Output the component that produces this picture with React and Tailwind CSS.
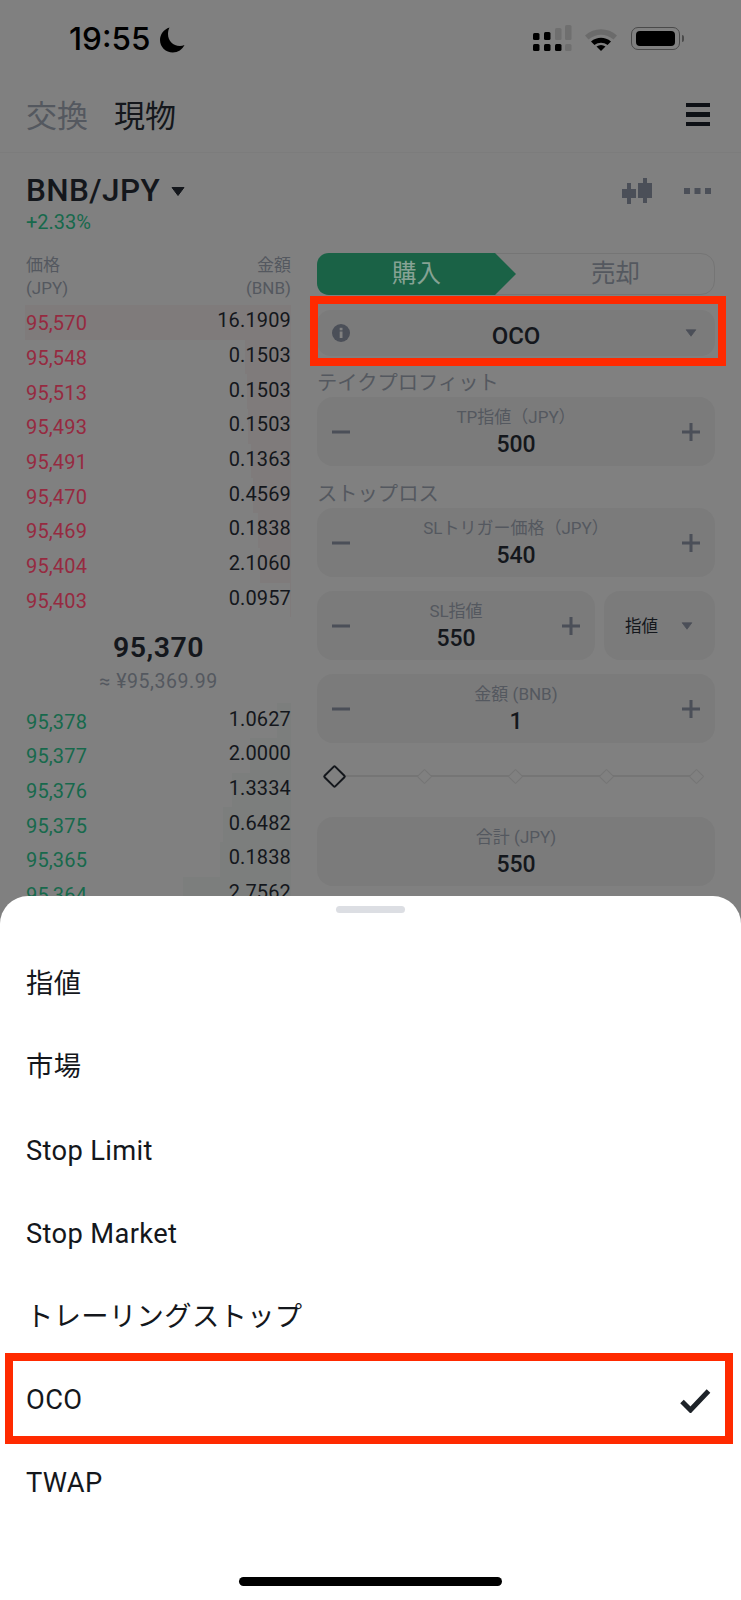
const asks = [
  ['95,570', '16.1909', 266],
  ['95,548', '0.1503', 46],
  ['95,513', '0.1503', 44],
  ['95,493', '0.1503', 43],
  ['95,491', '0.1363', 40],
  ['95,470', '0.4569', 38],
  ['95,469', '0.1838', 33],
  ['95,404', '2.1060', 31],
  ['95,403', '0.0957', 1],
];

const bids = [
  ['95,378', '1.0627', 14],
  ['95,377', '2.0000', 41],
  ['95,376', '1.3334', 59],
  ['95,375', '0.6482', 68],
  ['95,365', '0.1838', 71],
  ['95,364', '2.7562', 108],
];

const sheetItems = ['指値', '市場', 'Stop Limit', 'Stop Market', 'トレーリングストップ', 'OCO', 'TWAP'];

const Caret = ({ className }) => (
  <svg viewBox="0 0 14 10" className={className} fill="currentColor">
    <path d="M1 1h12L7 9z" stroke="currentColor" strokeWidth="1" strokeLinejoin="round" />
  </svg>
);

const Signal = () => (
  <svg width="39" height="27" viewBox="0 0 39 27" className="absolute left-[533px] top-[25px]">
    <rect x="0" y="8" width="6.5" height="7" rx="1.5" fill="#000" />
    <rect x="11" y="7" width="6.5" height="8" rx="1.5" fill="#000" />
    <rect x="22" y="3" width="6.5" height="12" rx="1.5" fill="#6f6f6f" />
    <rect x="32" y="0" width="6.5" height="15" rx="1.5" fill="#6f6f6f" />
    <rect x="0" y="19" width="6.5" height="7" rx="1.5" fill="#000" />
    <rect x="11" y="19" width="6.5" height="7" rx="1.5" fill="#000" />
    <rect x="22" y="19" width="6.5" height="7" rx="1.5" fill="#000" />
    <rect x="32" y="19" width="6.5" height="7" rx="1.5" fill="#6f6f6f" />
  </svg>
);

const Wifi = () => (
  <svg width="34" height="24" viewBox="0 0 34 24" className="absolute left-[584px] top-[27px]">
    <path d="M1 8.5C10 0 24 0 33 8.5L29.5 12.5C22 6 12 6 4.5 12.5z" fill="#6b6b6b" />
    <path d="M7 14.5C13 9.5 21 9.5 27 14.5L23.5 18C19.5 15 14.5 15 10.5 18z" fill="#000" />
    <path d="M12.5 19.5C15.5 17.5 18.5 17.5 21.5 19.5L17 24z" fill="#000" />
  </svg>
);

const Battery = () => (
  <div className="absolute left-[631px] top-[27px] flex items-center">
    <div className="flex h-[23px] w-[49px] items-center justify-center rounded-[7px] border-[1.5px] border-[#4a4a4a]">
      <div className="h-[15px] w-[39px] rounded-[4px] bg-black" />
    </div>
    <div className="ml-[2px] h-[7px] w-[2px] rounded-r-full bg-[#4a4a4a]" />
  </div>
);

const StatusBar = () => (
  <div className="relative h-[76px] shrink-0">
    <span className="absolute left-[69px] top-[20px] font-['Inter',sans-serif] text-[31.5px] leading-[38px] font-medium text-black">19:55</span>
    <svg width="25" height="26" viewBox="0 0 25 26" className="absolute left-[160px] top-[27px]">
      <path d="M9.5 0.5C3.8 2.4 0 7.3 0 13c0 7.1 5.8 12.5 12.8 12.5 5.2 0 9.6-2.9 11.7-7.4-1.4.6-3 .9-4.6.9C13 19 8 13.9 8 7c0-2.4.5-4.6 1.5-6.5z" fill="#000" />
    </svg>
    <Signal />
    <Wifi />
    <Battery />
  </div>
);

const Header = () => (
  <div className="flex h-[77px] shrink-0 items-center justify-between border-b border-[#7c7c7c] pr-[31px] pb-[1px] pl-[26px]">
    <div className="mt-[6px] flex items-center gap-[26px] text-[31px] leading-none">
      <span className="text-[#54585f]">交換</span>
      <span className="text-[#14171c]">現物</span>
    </div>
    <div className="mt-[2px] flex w-[24px] flex-col gap-[5px]">
      <div className="h-[4.5px] bg-[#0e1116]" />
      <div className="h-[4.5px] bg-[#0e1116]" />
      <div className="h-[4.5px] bg-[#0e1116]" />
    </div>
  </div>
);

const PairBar = () => (
  <div className="flex h-[97px] shrink-0 items-start justify-between pt-[20px] pr-[30px] pl-[26px]">
    <div>
      <div className="flex items-center gap-[11px]">
        <span className="text-[31.5px] leading-[36px] font-medium tracking-[0.4px] text-[#14171c]">BNB/JPY</span>
        <Caret className="h-[11px] w-[14px] text-[#14171c]" />
      </div>
      <div className="mt-[1px] text-[20px] leading-[24px] text-[#17694c]">+2.33%</div>
    </div>
    <div className="mt-[5px] flex items-center gap-[32px]">
      <svg width="30" height="26" viewBox="0 0 30 26" fill="#4b4f58">
        <rect x="5" y="5" width="4" height="21" />
        <rect x="0" y="11" width="14" height="9" />
        <rect x="21" y="0" width="4" height="25" />
        <rect x="16" y="5" width="14" height="15" />
      </svg>
      <svg width="27" height="6" viewBox="0 0 27 6" fill="#4b4f58">
        <rect x="0" y="0" width="6" height="6" />
        <rect x="10.5" y="0" width="6" height="6" />
        <rect x="21" y="0" width="6" height="6" />
      </svg>
    </div>
  </div>
);

const BookRow = ({ row, priceClass, barClass }) => (
  <div className="relative flex h-[34.7px] items-center justify-between">
    <div className={`absolute top-0 right-0 bottom-0 ${barClass}`} style={{ width: row[2] }} />
    <span className={`relative mt-[2px] text-[20px] tracking-[0.15px] ${priceClass}`}>{row[0]}</span>
    <span className="relative mt-[-4px] text-[20px] tracking-[0.15px] text-[#14171c]">{row[1]}</span>
  </div>
);

const OrderBook = () => (
  <div className="w-[265px] shrink-0">
    <div className="flex h-[55px] justify-between pt-[4px] text-[17px] leading-[23px] text-[#54585f]">
      <div>価格<br />(JPY)</div>
      <div className="text-right">金額<br />(BNB)</div>
    </div>
    {asks.map((r) => <BookRow key={r[0]} row={r} priceClass="text-[#962a40]" barClass="bg-[#7f7b7b]" />)}
    <div className="flex h-[86px] flex-col items-center pt-[11px]">
      <span className="text-[28.5px] leading-[40px] font-semibold tracking-[0.5px] text-[#14171c]">95,370</span>
      <span className="mt-[1px] text-[19.5px] leading-[26px] tracking-[0.55px] text-[#54585f]">≈ ¥95,369.99</span>
    </div>
    {bids.map((r) => <BookRow key={r[0]} row={r} priceClass="text-[#17694c]" barClass="bg-[#7c7e7d]" />)}
  </div>
);

const Stepper = ({ label, value, className = '' }) => (
  <div className={`flex h-[69px] items-center justify-between rounded-[16px] bg-[#7b7b7b] px-[15px] ${className}`}>
    <svg width="18" height="18" viewBox="0 0 18 18" fill="#4b4f58"><rect x="0" y="7.5" width="18" height="3" /></svg>
    <div className="flex flex-col items-center pt-[2px]">
      <span className="text-[17px] leading-[22px] text-[#54585f]">{label}</span>
      <span className="mt-[3px] text-[23px] leading-[28px] font-medium text-[#14171c]">{value}</span>
    </div>
    <svg width="18" height="18" viewBox="0 0 18 18" fill="#4b4f58"><rect x="0" y="7.5" width="18" height="3" /><rect x="7.5" y="0" width="3" height="18" /></svg>
  </div>
);

const Diamond = ({ big }) => (
  <div className={big ? 'h-[17px] w-[17px] rotate-45 rounded-[2px] border-2 border-[#14171c] bg-[#808080]' : 'h-[11px] w-[11px] rotate-45 rounded-[1px] border-[1.5px] border-[#757575] bg-[#808080]'} />
);

const Slider = () => (
  <div className="relative mt-[19px] ml-[3px] flex h-[28px] items-center gap-[62.7px]">
    <div className="absolute top-[13px] right-[14px] left-[14px] h-[1.5px] bg-[#757575]" />
    {[true, false, false, false, false].map((big, i) => (
      <div key={i} className="relative flex w-[28px] justify-center"><Diamond big={big} /></div>
    ))}
  </div>
);

const OrderForm = () => (
  <div className="flex w-[398px] shrink-0 flex-col pt-[3px]">
    <div className="relative flex h-[42px] rounded-[14px] border-[1.5px] border-[#757575]">
      <svg width="200" height="42" viewBox="0 0 200 42" className="absolute top-[-1.5px] left-[-1.5px]">
        <path d="M12 0H178L199 21L178 42H12C5 42 0 37 0 30V12C0 5 5 0 12 0Z" fill="#1a6246" />
      </svg>
      <div className="relative flex w-[197px] items-center justify-center text-[24.5px] leading-none text-[#86a294]">購入</div>
      <div className="flex flex-1 items-center justify-center pl-[2px] text-[24.5px] leading-none text-[#54585f]">売却</div>
    </div>
    <div className="relative mt-[15px] flex h-[46px] items-center justify-between rounded-[14px] bg-[#7b7b7b] pr-[18px] pl-[15px]">
      <svg width="18" height="18" viewBox="0 0 18 18">
        <circle cx="9" cy="9" r="9" fill="#4b4f58" />
        <rect x="7.7" y="7.5" width="2.8" height="6.5" fill="#808080" />
        <rect x="7.7" y="3.8" width="2.8" height="2.5" fill="#808080" />
      </svg>
      <span className="absolute inset-x-0 top-[9px] text-center text-[24px] leading-[34px] font-medium text-[#14171c]">OCO</span>
      <Caret className="h-[8px] w-[12px] text-[#4b4f58]" />
    </div>
    <div className="mt-[13px] h-[28px] text-[20.3px] leading-[29px] text-[#54585f]">テイクプロフィット</div>
    <Stepper label="TP指値（JPY）" value="500" />
    <div className="mt-[13px] h-[29px] text-[20.3px] leading-[30px] text-[#54585f]">ストップロス</div>
    <Stepper label="SLトリガー価格（JPY）" value="540" />
    <div className="mt-[14px] flex gap-[9px]">
      <Stepper label="SL指値" value="550" className="w-[278px]" />
      <div className="flex h-[69px] flex-1 items-center justify-between rounded-[16px] bg-[#7b7b7b] pr-[22px] pl-[21px]">
        <span className="mt-[4px] text-[16.5px] text-[#14171c]">指値</span>
        <Caret className="h-[8px] w-[12px] text-[#4b4f58]" />
      </div>
    </div>
    <div className="mt-[14px]"><Stepper label="金額 (BNB)" value="1" /></div>
    <Slider />
    <div className="mt-[27px] flex h-[69px] flex-col items-center justify-center rounded-[16px] bg-[#7b7b7b] pt-[2px]">
      <span className="text-[17px] leading-[22px] text-[#54585f]">合計 (JPY)</span>
      <span className="mt-[3px] text-[23px] leading-[28px] font-medium text-[#14171c]">550</span>
    </div>
  </div>
);

const Sheet = () => (
  <div className="relative z-10 flex h-[704px] shrink-0 flex-col rounded-t-[28px] bg-white">
    <div className="mx-auto mt-[10px] h-[7px] w-[69px] rounded-full bg-[#dcdee3]" />
    <div className="mt-[30px] flex flex-col px-[26px]">
      {sheetItems.map((item) => (
        <div key={item} className="flex h-[83.2px] items-center justify-between text-[27.3px] tracking-[0.35px] text-[#14171c]">
          <span>{item}</span>
          {item === 'OCO' && (
            <svg width="31" height="24" viewBox="0 0 31 24" className="mr-[4px]">
              <path d="M2 12.5L10.5 21L28.5 2" fill="none" stroke="#1e2329" strokeWidth="5" />
            </svg>
          )}
        </div>
      ))}
    </div>
    <div className="absolute bottom-[14px] left-[239px] h-[9px] w-[263px] rounded-full bg-black" />
  </div>
);

export default function App() {
  return (
    <div className="relative flex h-[1600px] w-[741px] flex-col overflow-hidden bg-[#808080] font-['Roboto','Noto_Sans_CJK_JP',sans-serif]">
      <div className="flex h-[896px] shrink-0 flex-col overflow-hidden">
        <StatusBar />
        <Header />
        <PairBar />
        <div className="flex gap-[26px] pl-[26px]">
          <OrderBook />
          <OrderForm />
        </div>
      </div>
      <Sheet />
      {/* annotation boxes sit on top of the screen */}
      <div className="absolute top-[296px] left-[310px] z-20 h-[70px] w-[416px] border-[8px] border-[#ff2a00]" />
      <div className="absolute top-[1353px] left-[5px] z-20 h-[91px] w-[728px] border-[8px] border-[#ff2a00]" />
    </div>
  );
}
